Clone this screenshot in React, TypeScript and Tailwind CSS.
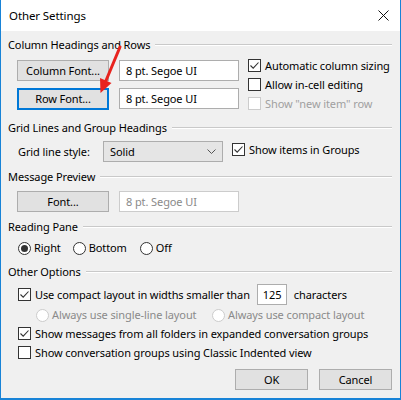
import React from 'react';

const font = { fontFamily: '"Noto Sans", "Open Sans", sans-serif' };

function SectionHeader({ title, className = '' }: { title: string; className?: string }) {
  return (
    <div className={`flex h-4 items-center pl-[7px] pr-[8px] ${className}`}>
      <span className="whitespace-nowrap leading-4">{title}</span>
      <div className="ml-[5px] flex-1 border-t border-b border-t-[#c9c9c9] border-b-white" />
    </div>
  );
}

function Checkbox({ checked = false, disabled = false }: { checked?: boolean; disabled?: boolean }) {
  return (
    <span
      className={`flex h-[13px] w-[13px] shrink-0 items-center justify-center border bg-white ${
        disabled ? 'border-[#cccccc]' : 'border-[#333333]'
      }`}
    >
      {checked ? (
        <svg width="11" height="11" viewBox="0 0 11 11">
          <path d="M1.5 5.5 L4.2 8.2 L9.5 2.5" fill="none" stroke="#333" strokeWidth="1.1" />
        </svg>
      ) : null}
    </span>
  );
}

function Radio({ selected = false, disabled = false }: { selected?: boolean; disabled?: boolean }) {
  return (
    <span
      className={`flex h-[13px] w-[13px] shrink-0 items-center justify-center rounded-full border bg-white ${
        disabled ? 'border-[#cccccc]' : 'border-[#333333]'
      }`}
    >
      {selected ? <span className="h-[7px] w-[7px] rounded-full bg-[#333333]" /> : null}
    </span>
  );
}

function CheckRow({
  label,
  checked,
  disabled,
  className = '',
}: {
  label: string;
  checked?: boolean;
  disabled?: boolean;
  className?: string;
}) {
  return (
    <div className={`flex items-center gap-[4px] ${className}`}>
      <Checkbox checked={checked} disabled={disabled} />
      <span className={`whitespace-nowrap leading-4 ${disabled ? 'text-[#a0a0a0]' : ''}`}>{label}</span>
    </div>
  );
}

function Button({ label, focused, className = '' }: { label: string; focused?: boolean; className?: string }) {
  return (
    <div
      className={`flex items-center justify-center bg-[#e1e1e1] ${
        focused ? 'border-2 border-[#0078d7]' : 'border border-[#adadad]'
      } ${className}`}
    >
      {label}
    </div>
  );
}

function TextField({ value, disabled, className = '' }: { value: string; disabled?: boolean; className?: string }) {
  return (
    <div
      className={`flex items-center border bg-white px-[6px] ${
        disabled ? 'border-[#cccccc] text-[#8a8a8a]' : 'border-[#adadad]'
      } ${className}`}
    >
      {value}
    </div>
  );
}

export default function App() {
  return (
    <div
      className="relative flex h-[400px] w-[401px] flex-col overflow-hidden border-x border-b-2 border-[#1883d7] bg-[#f0f0f0] text-[11px] leading-4 tracking-[-0.1px] text-black"
      style={font}
    >
      {/* title bar */}
      <div className="flex h-[31px] items-center justify-between bg-white pl-[8px] pr-[11px]">
        <span className="text-[11.5px]">Other Settings</span>
        <svg width="11" height="11" viewBox="0 0 11 11">
          <path d="M0.5 0.5 L10.5 10.5 M10.5 0.5 L0.5 10.5" stroke="#111" strokeWidth="1" />
        </svg>
      </div>

      <SectionHeader title="Column Headings and Rows" className="mt-[6px]" />
      <div className="mt-[3px] flex">
        <div className="flex flex-col gap-[7px] pl-[16px] pt-[4px]">
          <div className="flex gap-[10px]">
            <Button label="Column Font..." className="h-[21px] w-[92px]" />
            <TextField value="8 pt. Segoe UI" className="h-[21px] w-[120px]" />
          </div>
          <div className="flex gap-[10px]">
            <Button label="Row Font..." focused className="h-[22px] w-[92px]" />
            <TextField value="8 pt. Segoe UI" className="h-[21px] w-[120px]" />
          </div>
        </div>
        <div className="ml-[9px] flex flex-col">
          <CheckRow label="Automatic column sizing" checked className="h-[19px]" />
          <CheckRow label="Allow in-cell editing" className="h-[19px]" />
          <CheckRow label={'Show "new item" row'} disabled className="h-[19px]" />
        </div>
      </div>

      <SectionHeader title="Grid Lines and Group Headings" className="mt-[7px]" />
      <div className="mt-[5px] flex items-center">
        <span className="w-[102px] pl-[17px]">Grid line style:</span>
        <div className="flex h-[21px] w-[120px] items-center justify-between border border-[#adadad] bg-[#e5e5e5] pl-[6px] pr-[6px]">
          <span>Solid</span>
          <svg width="9" height="6" viewBox="0 0 9 6">
            <path d="M0.5 0.5 L4.5 4.5 L8.5 0.5" fill="none" stroke="#555" strokeWidth="1" />
          </svg>
        </div>
        <CheckRow label="Show items in Groups" checked className="ml-[9px] -mt-[4px]" />
      </div>

      <SectionHeader title="Message Preview" className="mt-[7px]" />
      <div className="mt-[6px] flex gap-[10px] pl-[16px]">
        <Button label="Font..." className="h-[21px] w-[92px]" />
        <TextField value="8 pt. Segoe UI" disabled className="h-[21px] w-[120px]" />
      </div>

      <SectionHeader title="Reading Pane" className="mt-[7px]" />
      <div className="mt-[6px] flex h-[14px] items-center pl-[17px]">
        <div className="flex items-center gap-[3px]">
          <Radio selected />
          <span>Right</span>
        </div>
        <div className="ml-[12px] flex items-center gap-[3px]">
          <Radio />
          <span>Bottom</span>
        </div>
        <div className="ml-[13px] flex items-center gap-[3px]">
          <Radio />
          <span>Off</span>
        </div>
      </div>

      <SectionHeader title="Other Options" className="mt-[9px]" />
      <div className="mt-[4px] flex items-center pl-[17px]">
        <CheckRow label="Use compact layout in widths smaller than" checked />
        <TextField value="125" className="ml-[7px] h-[21px] w-[30px] !px-[5px]" />
        <span className="ml-[7px]">characters</span>
      </div>
      <div className="mt-[2px] flex h-[16px] items-center pl-[35px] text-[#8a8a8a]">
        <div className="flex w-[176px] items-center gap-[3px]">
          <Radio disabled />
          <span className="whitespace-nowrap">Always use single-line layout</span>
        </div>
        <div className="flex items-center gap-[3px]">
          <Radio disabled />
          <span className="whitespace-nowrap">Always use compact layout</span>
        </div>
      </div>
      <CheckRow label="Show messages from all folders in expanded conversation groups" checked className="mt-[1px] h-[19px] pl-[17px]" />
      <CheckRow label="Show conversation groups using Classic Indented view" className="h-[19px] pl-[17px]" />

      <div className="mt-[7px] flex justify-end gap-[11px] pr-[8px]">
        <Button label="OK" className="h-[21px] w-[73px]" />
        <Button label="Cancel" className="h-[21px] w-[73px]" />
      </div>

      {/* red arrow pointing at Row Font */}
      <svg className="pointer-events-none absolute left-0 top-0" width="401" height="400" viewBox="0 0 401 400">
        <path d="M119 47 L104 83" stroke="#e8231e" strokeWidth="3" strokeLinecap="round" />
        <path d="M99.5 93 L110.5 83 L99 78 Z" fill="#e8231e" />
      </svg>
    </div>
  );
}
